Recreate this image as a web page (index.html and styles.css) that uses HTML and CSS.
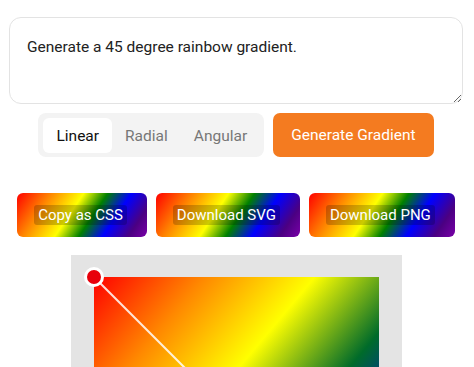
FILE: index.html
```html
<!DOCTYPE html>
<html lang="en">
<head>
    <meta charset="UTF-8">
    <meta name="viewport" content="width=device-width, initial-scale=1.0">
    <title>Gradient Generator</title>
    <link rel="stylesheet" href="styles.css">
</head>
<body>
    <div class="page">
        <textarea class="prompt">Generate a 45 degree rainbow gradient.</textarea>

        <div class="controls">
            <div class="tabs">
                <button class="tab active">Linear</button>
                <button class="tab">Radial</button>
                <button class="tab">Angular</button>
            </div>
            <button class="generate">Generate Gradient</button>
        </div>

        <div class="actions">
            <button class="action"><span>Copy as CSS</span></button>
            <button class="action"><span>Download SVG</span></button>
            <button class="action"><span>Download PNG</span></button>
        </div>

        <div class="preview">
            <div class="swatch">
                <svg class="guide" width="285" height="450">
                    <line x1="0" y1="0" x2="285" y2="285" stroke="#fff" stroke-opacity="0.85" stroke-width="2"/>
                </svg>
                <div class="handle"></div>
            </div>
        </div>
    </div>
</body>
</html>
```

FILE: styles.css
```css
body {
    margin: 0;
    font-family: Roboto, "Liberation Sans", sans-serif;
    background: #fff;
    color: #222;
    overflow: hidden;
}

.page {
    display: flex;
    flex-direction: column;
    align-items: center;
    padding: 17px 11px 0 9px;
}

.prompt {
    display: block;
    width: 454px;
    height: 87px;
    box-sizing: border-box;
    padding: 20px 17px;
    border: 1px solid #e3e3e3;
    border-radius: 12px;
    font-family: Roboto, sans-serif;
    font-size: 15.5px;
    color: #222;
    resize: vertical;
}

.controls {
    display: flex;
    gap: 9px;
    margin-top: 9px;
}

.tabs {
    display: flex;
    padding: 5px 4px 4px 5px;
    background: #f3f3f3;
    border-radius: 8px;
}

.tab {
    height: 35px;
    padding: 0 13px;
    border: none;
    border-radius: 6px;
    background: transparent;
    font-family: Roboto, sans-serif;
    font-size: 15.5px;
    color: #777;
}

.tab.active {
    background: #fff;
    color: #111;
}

.generate {
    height: 44px;
    padding: 0 18px;
    border: none;
    border-radius: 7px;
    background: #f47b20;
    color: #fff;
    font-family: Roboto, sans-serif;
    font-size: 15.5px;
}

.actions {
    display: flex;
    gap: 9px;
    margin-top: 36px;
}

.action {
    flex-shrink: 0;
    height: 44px;
    padding: 0 20px 0 17px;
    border: none;
    border-radius: 6px;
    background: linear-gradient(124deg, #ff0000 0%, #ff8800 22%, #ffff00 42%, #008000 57%, #0000ff 72%, #4b0082 88%, #7a00a8 100%);
    font-family: Roboto, sans-serif;
    font-size: 15px;
    color: #fff;
    white-space: nowrap;
}

.action span {
    display: inline-block;
    padding: 1px 4px;
    border-radius: 3px;
    background: rgba(0, 0, 0, 0.2);
}

.preview {
    margin-top: 18px;
    width: 331px;
    box-sizing: border-box;
    padding: 22px 23px;
    background: #e4e4e4;
}

.swatch {
    position: relative;
    width: 285px;
    height: 450px;
    background: linear-gradient(130deg, #ff0000, #ff8800, #ffff00, #006b2a, #0000ff, #4b0082, #7a00a8);
}

.guide {
    position: absolute;
    left: 0;
    top: 0;
}

.handle {
    position: absolute;
    left: -10px;
    top: -10px;
    width: 14px;
    height: 14px;
    border: 3px solid #fff;
    border-radius: 50%;
    background: #e8000b;
}
```
